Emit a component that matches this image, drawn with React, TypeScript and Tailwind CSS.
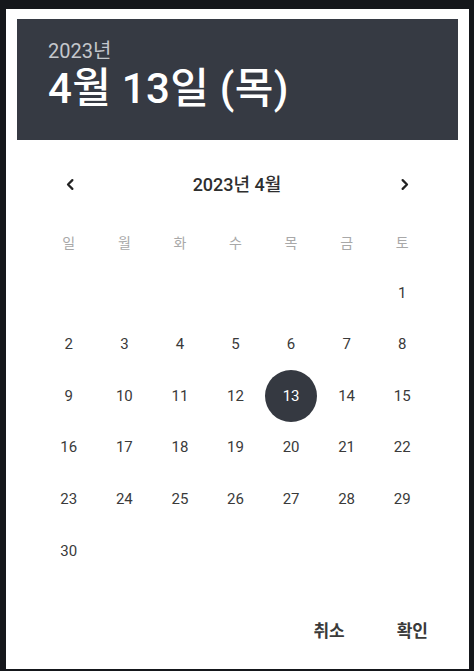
import React from "react";

const font = { fontFamily: "Roboto, 'Noto Sans CJK KR', sans-serif" };

function ChevronLeft() {
  return (
    <svg width="15" height="15" viewBox="0 0 24 24" fill="none" stroke="#222" strokeWidth="3.6" strokeLinecap="round" strokeLinejoin="round">
      <path d="M15 5 L8 12 L15 19" />
    </svg>
  );
}
function ChevronRight() {
  return (
    <svg width="15" height="15" viewBox="0 0 24 24" fill="none" stroke="#222" strokeWidth="3.6" strokeLinecap="round" strokeLinejoin="round">
      <path d="M9 5 L16 12 L9 19" />
    </svg>
  );
}

export default function App() {
  const weekdays = ["일", "월", "화", "수", "목", "금", "토"];
  const cells: (number | null)[] = [];
  for (let i = 0; i < 6; i++) cells.push(null);
  for (let d = 1; d <= 30; d++) cells.push(d);
  while (cells.length < 42) cells.push(null);
  const rows: (number | null)[][] = [];
  for (let r = 0; r < 6; r++) rows.push(cells.slice(r * 7, r * 7 + 7));

  return (
    <div className="w-[474px] h-[671px] bg-[#15171b] pt-[9px] pl-[6px] overflow-hidden" style={font}>
      <div className="w-[463px] h-[660px] bg-white pt-[10px] px-[11px] flex flex-col">
        <div className="h-[121px] bg-[#363a43] pl-[31px] pt-[20px]">
          <div className="text-[20px] leading-[24px] text-[#c4c7cc]">2023년</div>
          <div className="mt-[3px] text-[42px] leading-[46px] font-medium text-white tracking-[0.3px]">4월 13일 (목)</div>
        </div>

        <div className="mt-[22px] h-[44px] flex items-center">
          <div className="ml-[31px] w-[44px] h-[44px] flex items-center justify-center">
            <ChevronLeft />
          </div>
          <div className="flex-1 text-center text-[18px] font-medium text-[#2e2e2e]">2023년 4월</div>
          <div className="mr-[32px] w-[44px] h-[44px] flex items-center justify-center">
            <ChevronRight />
          </div>
        </div>

        <div className="ml-[24px] w-[389px]">
          <div className="mt-[17px] grid grid-cols-7 h-[40px] items-center">
            {weekdays.map((w) => (
              <div key={w} className="text-center text-[14px] text-[#a8a8a8]">{w}</div>
            ))}
          </div>
          <div className="mt-[4px]">
            {rows.map((row, ri) => (
              <div key={ri} className="grid grid-cols-7 h-[51.6px]">
                {row.map((d, ci) => (
                  <div key={ci} className="flex items-center justify-center">
                    {d === 13 ? (
                      <div className="w-[52px] h-[52px] shrink-0 rounded-full bg-[#353941] flex items-center justify-center text-[15px] text-white">13</div>
                    ) : (
                      <span className="text-[15px] text-[#3a3a3a]">{d ?? ""}</span>
                    )}
                  </div>
                ))}
              </div>
            ))}
          </div>
        </div>

        <div className="mt-[35px] flex justify-end items-center gap-[28px] mr-[18px]">
          <div className="h-[40px] px-[12px] flex items-center text-[17px] font-bold text-[#3a3a3a]">취소</div>
          <div className="h-[40px] px-[12px] flex items-center text-[17px] font-bold text-[#3a3a3a]">확인</div>
        </div>
      </div>
    </div>
  );
}
